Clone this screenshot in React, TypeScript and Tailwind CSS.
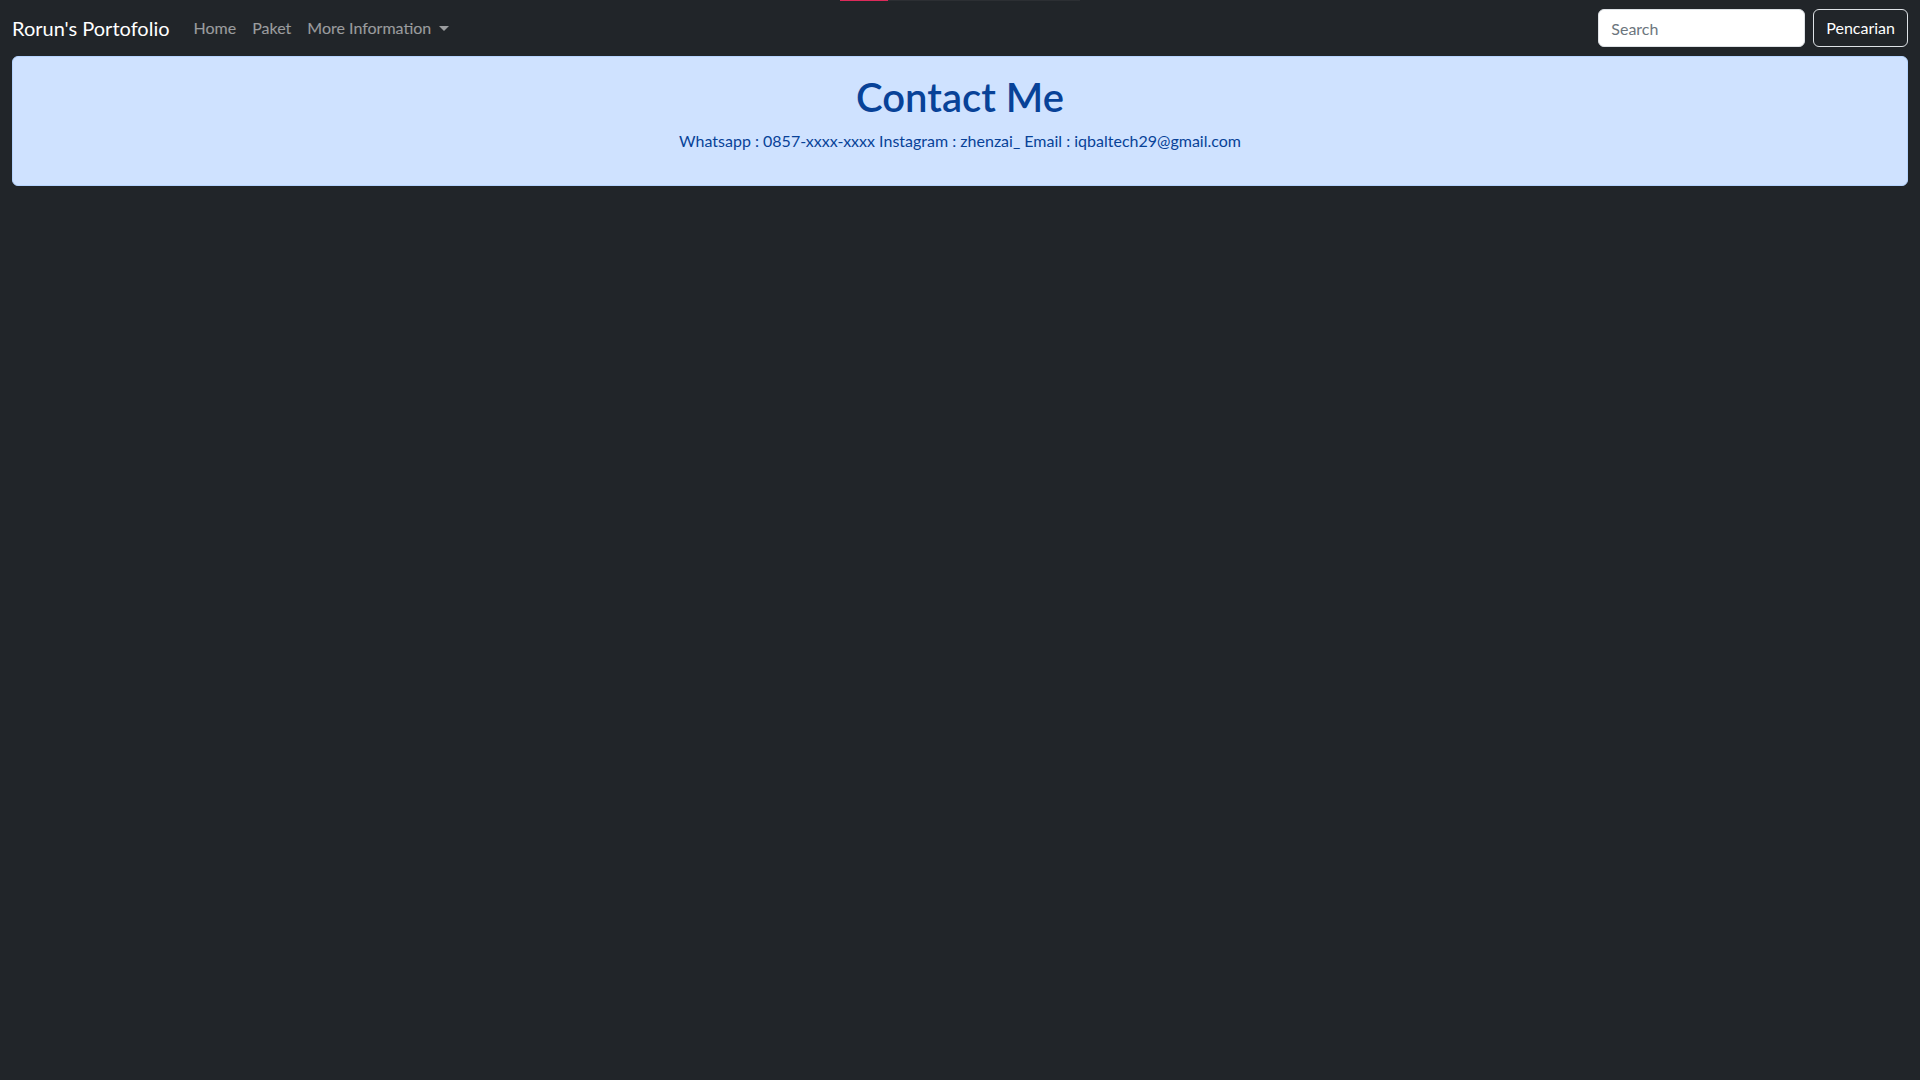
export default function App() {
  return (
    <div
      className="min-h-screen w-full bg-[#212529] relative"
      style={{ fontFamily: 'Lato, "Noto Sans", sans-serif' }}
    >
      {/* top loading strip */}
      <div className="absolute top-0 left-[840px] flex">
        <div className="h-px w-[48px] bg-[#dc2a5a]" />
        <div className="h-px w-[192px] bg-[#2c2f33]" />
      </div>

      <nav className="h-14 px-3 flex items-center justify-between">
        <div className="flex items-center">
          <a href="#" className="text-[20px] text-white mr-4 py-[5px] leading-[30px]">
            Rorun's Portofolio
          </a>
          <ul className="flex items-center">
            <li>
              <a href="#" className="px-2 text-base text-white/55 leading-6">
                Home
              </a>
            </li>
            <li>
              <a href="#" className="px-2 text-base text-white/55 leading-6">
                Paket
              </a>
            </li>
            <li>
              <a href="#" className="px-2 text-base text-white/55 leading-6 flex items-center">
                More Information
                <span className="ml-[8px] mt-[1px] w-0 h-0 border-l-[5px] border-r-[5px] border-t-[5px] border-l-transparent border-r-transparent border-t-white/55" />
              </a>
            </li>
          </ul>
        </div>
        <form className="flex items-center" onSubmit={(e) => e.preventDefault()}>
          <input
            type="search"
            placeholder="Search"
            className="w-[207px] h-[38px] px-3 mr-2 rounded-md bg-white border border-[#dee2e6] text-base text-[#212529] placeholder:text-[#6c757d] outline-none"
          />
          <button
            type="submit"
            className="h-[38px] px-3 rounded-md border border-[#dee2e6] text-white text-base"
          >
            Pencarian
          </button>
        </form>
      </nav>

      <div className="px-3">
        <div className="bg-[#cfe2ff] border border-[#b6d4fe] rounded-md p-4 text-center text-[#084298]">
          <h1 className="text-[40px] font-semibold leading-[1.2] mb-2">Contact Me</h1>
          <p className="text-base leading-6 mb-4">
            Whatsapp : 0857-xxxx-xxxx Instagram : zhenzai_ Email : iqbaltech29@gmail.com
          </p>
        </div>
      </div>
    </div>
  );
}
